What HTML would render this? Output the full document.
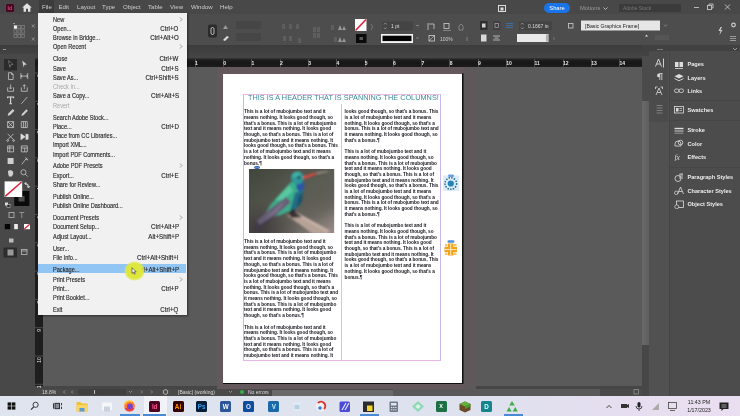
<!DOCTYPE html>
<html><head><meta charset="utf-8"><title>InDesign</title>
<style>
*{margin:0;padding:0;box-sizing:border-box}
html,body{width:740px;height:416px;overflow:hidden;background:#5a5a5a;font-family:"Liberation Sans",sans-serif}
.a{position:absolute}
#menubar{left:0;top:0;width:740px;height:14px;background:#484848}
#menubar span{position:absolute;top:3px;font-size:6.1px;color:#cdcdcd;line-height:8px;filter:blur(.3px)}
#ctrl{left:0;top:14px;width:740px;height:32px;background:#4d4d4d}
#tabbar{left:0;top:45px;width:740px;height:14px;background:linear-gradient(#3c3c3c,#464646)}
#hruler{left:35px;top:57.5px;width:607px;height:9.5px;background:linear-gradient(#383838 0,#1e1e1e 2px,#161616 5px,#1c1c1c 100%)}
#hruler span{position:absolute;top:2.3px;font-size:5px;font-weight:bold;color:#e6e6e6;line-height:7px;filter:blur(.3px)}
#hruler i{position:absolute;top:1px;width:1px;height:8.5px;background:#4a4a4a}
#tools{left:0;top:54px;width:35px;height:342px;background:#484848}
#vruler{left:35px;top:67px;width:8.3px;height:321px;background:#1e1e1e}
#canvas{left:43px;top:67px;width:599px;height:322px;background:#5a5a5a}
#status{left:35px;top:386px;width:625px;height:10px;background:#464646}
#taskbar{left:0;top:396px;width:740px;height:20px;background:linear-gradient(90deg,#dfe4ee 0%,#dde2ee 60%,#e6def0 85%,#eadff0 100%)}
#page{left:223px;top:73.5px;width:239px;height:309px;background:#fff}
#menu{left:38px;top:13px;width:148.5px;height:301.8px;background:#f1f1f1;box-shadow:1px 1px 2px rgba(0,0,0,.45)}
#menu div{position:absolute;left:0;width:148px;height:9px;font-size:6.6px;line-height:9px;color:#2a2a2a;white-space:nowrap;-webkit-text-stroke:.15px #2a2a2a}
#menu div.dis{-webkit-text-stroke:0}
#menu div u{position:absolute;left:14.5px;text-decoration:none;transform:scaleX(.85);transform-origin:0 50%}
#menu div b{position:absolute;right:7.4px;font-weight:normal;transform:scaleX(.93);transform-origin:100% 50%}
#menu div.dis{color:#a8a8a8}
#menu div.hl{background:none}
.doc{font-weight:bold;font-size:4.72px;line-height:5.7px;color:#15151c;letter-spacing:-.045px;white-space:nowrap}
.blur{filter:blur(.35px)}
</style></head><body>
<div class="a" id="menubar"><div style="position:absolute;left:39px;top:0;width:15px;height:14px;background:#3c3c3c"></div>
<span style="left:42px">File</span>
<span style="left:58.5px">Edit</span>
<span style="left:77px">Layout</span>
<span style="left:102px">Type</span>
<span style="left:123px">Object</span>
<span style="left:148px">Table</span>
<span style="left:170px">View</span>
<span style="left:191px">Window</span>
<span style="left:220px">Help</span>
</div>
<div class="a" id="ctrl"></div>
<div class="a" id="tabbar"></div>
<div class="a" id="canvas"></div>
<div class="a" id="hruler">
<i style="left:18.2px"></i><span style="left:18.5px">6</span>
<i style="left:46.5px"></i><span style="left:46.8px">5</span>
<i style="left:74.8px"></i><span style="left:75.1px">4</span>
<i style="left:103.1px"></i><span style="left:103.4px">3</span>
<i style="left:131.4px"></i><span style="left:131.7px">2</span>
<i style="left:159.7px"></i><span style="left:160.0px">1</span>
<i style="left:188.0px"></i><span style="left:188.3px">0</span>
<i style="left:216.3px"></i><span style="left:216.6px">1</span>
<i style="left:244.6px"></i><span style="left:244.9px">2</span>
<i style="left:272.9px"></i><span style="left:273.2px">3</span>
<i style="left:301.2px"></i><span style="left:301.5px">4</span>
<i style="left:329.5px"></i><span style="left:329.8px">5</span>
<i style="left:357.8px"></i><span style="left:358.1px">6</span>
<i style="left:386.1px"></i><span style="left:386.4px">7</span>
<i style="left:414.4px"></i><span style="left:414.7px">8</span>
<i style="left:442.7px"></i><span style="left:443.0px">9</span>
<i style="left:471.0px"></i><span style="left:471.3px">10</span>
<i style="left:499.3px"></i><span style="left:499.6px">11</span>
<i style="left:527.6px"></i><span style="left:527.9px">12</span>
<i style="left:555.9px"></i><span style="left:556.2px">13</span>
<i style="left:584.2px"></i><span style="left:584.5px">14</span>
</div>
<div class="a" id="tools"></div>
<div class="a" id="vruler"></div>
<div class="a" id="status"></div>
<div class="a" style="left:216.5px;top:67px;width:259px;height:322px;background:#5e585a"></div>
<div class="a" style="left:216.5px;top:67px;width:247px;height:322px;background:#64585d"></div>
<div class="a" style="left:462px;top:73px;width:2px;height:311px;background:#4a2a32"></div>
<div class="a" style="left:223px;top:73.5px;width:240px;height:310px;background:#111"></div>
<div class="a" id="page"></div>
<div class="a doc blur" style="left:244px;top:109.2px">This is a lot of mubojumbo text and it<br>means nothing. It looks good though, so<br>that&#x27;s a bonus. This is a lot of mubojumbo<br>text and it means nothing. It looks good<br>though, so that&#x27;s a bonus. This is a lot of<br>mubojumbo text and it means nothing. It<br>looks good though, so that&#x27;s a bonus. This<br>is a lot of mubojumbo text and it means<br>nothing. It looks good though, so that&#x27;s a<br>bonus.¶</div>
<div class="a doc blur" style="left:244px;top:239.0px">This is a lot of mubojumbo text and it<br>means nothing. It looks good though, so<br>that&#x27;s a bonus. This is a lot of mubojumbo<br>text and it means nothing. It looks good<br>though, so that&#x27;s a bonus. This is a lot of<br>mubojumbo text and it means nothing. It<br>looks good though, so that&#x27;s a bonus. This<br>is a lot of mubojumbo text and it means<br>nothing. It looks good though, so that&#x27;s a<br>bonus. This is a lot of mubojumbo text and<br>it means nothing. It looks good though, so<br>that&#x27;s a bonus. This is a lot of mubojumbo<br>text and it means nothing. It looks good<br>though, so that&#x27;s a bonus.¶<br>&nbsp;<br>This is a lot of mubojumbo text and it<br>means nothing. It looks good though, so<br>that&#x27;s a bonus. This is a lot of mubojumbo<br>text and it means nothing. It looks good<br>though, so that&#x27;s a bonus. This is a lot of<br>mubojumbo text and it means nothing. It</div>
<div class="a doc blur" style="left:344.6px;top:109.2px">looks good though, so that&#x27;s a bonus. This<br>is a lot of mubojumbo text and it means<br>nothing. It looks good though, so that&#x27;s a<br>bonus. This is a lot of mubojumbo text and<br>it means nothing. It looks good though, so<br>that&#x27;s a bonus.¶<br>&nbsp;<br>This is a lot of mubojumbo text and it<br>means nothing. It looks good though, so<br>that&#x27;s a bonus. This is a lot of mubojumbo<br>text and it means nothing. It looks good<br>though, so that&#x27;s a bonus. This is a lot of<br>mubojumbo text and it means nothing. It<br>looks good though, so that&#x27;s a bonus. This<br>is a lot of mubojumbo text and it means<br>nothing. It looks good though, so that&#x27;s a<br>bonus. This is a lot of mubojumbo text and<br>it means nothing. It looks good though, so<br>that&#x27;s a bonus.¶<br>&nbsp;<br>This is a lot of mubojumbo text and it<br>means nothing. It looks good though, so<br>that&#x27;s a bonus. This is a lot of mubojumbo<br>text and it means nothing. It looks good<br>though, so that&#x27;s a bonus. This is a lot of<br>mubojumbo text and it means nothing. It<br>looks good though, so that&#x27;s a bonus. This<br>is a lot of mubojumbo text and it means<br>nothing. It looks good though, so that&#x27;s a<br>bonus.¶</div>
<div class="a blur" style="left:248px;top:93.3px;font-size:7.3px;line-height:9px;color:#3a8b99;white-space:nowrap;letter-spacing:.02px">THIS IS A HEADER THAT IS SPANNING THE COLUMNS!</div>
<div class="a" style="left:243px;top:94px;width:197.5px;height:267px;border:1px solid #b9a6ee;border-top-color:#e7a6e0;border-bottom-color:#e7a6e0;opacity:.8"></div>
<div class="a" style="left:341px;top:104px;width:1px;height:256px;background:#cfc4f2"></div>
<style>
.ic{position:absolute;fill:none;stroke:#d6d6d6;stroke-width:1;overflow:visible}
.rp{position:absolute;left:687.5px;font-size:5.6px;font-weight:bold;color:#ececec;line-height:8px;white-space:nowrap}
.tb{position:absolute;top:400.6px;width:11px;height:11px;border-radius:1.5px}
.tb span{position:absolute;left:0;top:0;width:11px;text-align:center;font-size:6.5px;line-height:11px;font-weight:bold}
.ul{position:absolute;top:414.3px;height:1.7px;background:#4a8ad4}
.st{position:absolute;top:388.5px;font-size:5px;line-height:7px;color:#d8d8d8;white-space:nowrap}
</style>
<div class="a blur" style="left:5.7px;top:3.8px;width:8.2px;height:8px;background:#4a0620;border-radius:1.5px"><span style="position:absolute;left:0;width:8.2px;text-align:center;top:0;font-size:5px;line-height:8px;color:#e0457c;font-weight:bold">Id</span></div>
<svg class="a blur" style="left:22px;top:3px" width="10" height="9" viewBox="0 0 10 9"><path d="M5 0.3 L9.8 4.6 H8.4 V8.8 H6 V5.8 H4 V8.8 H1.6 V4.6 H0.2 Z" fill="#e4e4e4"/></svg>
<div class="a blur" style="left:544px;top:3px;width:26px;height:10px;border-radius:5px;background:#1a74e8"><span style="position:absolute;left:0;width:26px;text-align:center;font-size:5.8px;line-height:10px;color:#fff">Share</span></div>
<div class="a blur" style="left:580px;top:4px;font-size:5.8px;line-height:8px;color:#9a9a9a">Motions</div>
<svg class="a" style="left:603px;top:7px" width="5" height="3"><path d="M0.5 0.5 L2.5 2.5 L4.5 0.5" stroke="#bbb" fill="none"/></svg>
<div class="a blur" style="left:619px;top:3.5px;width:62px;height:8.5px;background:#3b3b3b;border-radius:1px"><span style="position:absolute;left:4px;top:0;font-size:5px;line-height:8.5px;color:#777">Adobe Stock</span></div>
<svg class="a blur" style="left:497px;top:3px" width="10" height="10"><rect x="1.5" y="2.5" width="7" height="6" stroke="#ddd" fill="none"/><rect x="3.5" y="4.5" width="3" height="3" fill="#ddd"/></svg>
<svg class="a blur" style="left:692px;top:2px" width="44" height="10"><path d="M2 5.5 H7" stroke="#c4c4c4" stroke-width=".9"/><rect x="15.5" y="3.5" width="4" height="4" stroke="#c4c4c4" fill="none" stroke-width=".9"/><path d="M17 3.5 V2 H21 V6 H19.5" stroke="#c4c4c4" fill="none" stroke-width=".9"/><path d="M33 2.5 L38 7.5 M38 2.5 L33 7.5" stroke="#c4c4c4" stroke-width=".9"/></svg>
<svg class="a blur" style="left:0;top:0" width="740" height="48" viewBox="0 0 740 48"><rect x="13.5" y="23" width="1" height="1" fill="#ddd" /><rect x="14.0" y="25.5" width="2.9" height="3.2" fill="none" stroke="#8a8a8a" stroke-width=".6"/><rect x="14.0" y="29.9" width="2.9" height="3.2" fill="none" stroke="#8a8a8a" stroke-width=".6"/><rect x="14.0" y="34.3" width="2.9" height="3.2" fill="none" stroke="#8a8a8a" stroke-width=".6"/><rect x="17.9" y="25.5" width="2.9" height="3.2" fill="none" stroke="#8a8a8a" stroke-width=".6"/><rect x="17.9" y="29.9" width="2.9" height="3.2" fill="none" stroke="#8a8a8a" stroke-width=".6"/><rect x="17.9" y="34.3" width="2.9" height="3.2" fill="none" stroke="#8a8a8a" stroke-width=".6"/><rect x="21.8" y="25.5" width="2.9" height="3.2" fill="none" stroke="#8a8a8a" stroke-width=".6"/><rect x="21.8" y="29.9" width="2.9" height="3.2" fill="none" stroke="#8a8a8a" stroke-width=".6"/><rect x="21.8" y="34.3" width="2.9" height="3.2" fill="none" stroke="#8a8a8a" stroke-width=".6"/><rect x="14" y="25.5" width="2.9" height="3.2" fill="#eee" /><path d="M32 24.5 l2.5 3 m0 -3 l-2.5 3 M32 37.5 l2.5 3 m0 -3 l-2.5 3" stroke="#aaa" stroke-width=".7"/><rect x="208" y="24.5" width="9" height="13" fill="#2b2b2b" rx="2"/><rect x="211" y="27.500" width="3" height="7" rx="1.500" fill="none" stroke="#ddd" stroke-width=".8"/><path d="M223 29 l2.5 -4 l2.5 4 z" fill="#999"/><path d="M223 40 l4 -4 l2 1 l-4 4 z" fill="#ddd"/><rect x="44" y="21" width="22" height="8" fill="#464646" /><rect x="44" y="33" width="22" height="8" fill="#464646" /><rect x="75" y="21" width="22" height="8" fill="#464646" /><rect x="75" y="33" width="22" height="8" fill="#464646" /><rect x="236" y="21" width="25" height="8" fill="#464646" /><rect x="236" y="33" width="25" height="8" fill="#464646" /><rect x="282" y="24" width="3" height="5" fill="#5e5e5e" /><rect x="289" y="24" width="3" height="5" fill="#5e5e5e" /><rect x="296" y="24" width="3" height="5" fill="#5e5e5e" /><rect x="283" y="36" width="3" height="5" fill="#5e5e5e" /><rect x="289" y="36" width="3" height="5" fill="#5e5e5e" /><rect x="298" y="38" width="3" height="5" fill="#5e5e5e" /><rect x="313" y="27" width="3" height="5" fill="#5e5e5e" /><rect x="317" y="27" width="3" height="5" fill="#5e5e5e" /><rect x="313" y="33" width="3" height="5" fill="#5e5e5e" /><rect x="317" y="33" width="3" height="5" fill="#5e5e5e" /><rect x="331" y="25" width="3" height="5" fill="#5e5e5e" /><rect x="334" y="37" width="3" height="5" fill="#5e5e5e" /><path d="M338 30 l2 -5 l2 5 l2 -4 l2 4 z M338 42 l2 -5 l2 5 l2 -4 l2 4 z" fill="#999"/><rect x="355" y="19" width="11.5" height="12" fill="#fff" /><path d="M355.5 30.5 L366 19.5" stroke="#e0203a" stroke-width="1.6"/><rect x="356" y="34" width="10.5" height="9" fill="#0a0a0a" /><rect x="359.5" y="37" width="3.5" height="3" fill="#555" /><path d="M371 24 l1.5 3 l-1.5 3" stroke="#888" fill="none" stroke-width=".7"/><rect x="382" y="21.5" width="31" height="9" fill="#444" /><text x="391" y="28.3" font-size="5" fill="#ddd" font-family="Liberation Sans">1 pt</text><path d="M384 24.5 l1.3 -1.5 l1.3 1.5 M384 27.5 l1.3 1.5 l1.3 -1.5" stroke="#bbb" fill="none" stroke-width=".6"/><path d="M416 25.5 h3" stroke="#999" stroke-width=".7"/><path d="M416 38 h3" stroke="#999" stroke-width=".7"/><rect x="381" y="34" width="32" height="9" fill="#f4f4f4" /><rect x="382.5" y="35.7" width="29" height="5.4" fill="#050505" /><path d="M429 24 h5 v5 M428 23 v7" stroke="#ccc" fill="none" stroke-width=".8"/><rect x="444" y="23.5" width="5" height="5" stroke="#ccc" fill="none" stroke-width=".8"/><path d="M443 30.5 h8" stroke="#999" stroke-width=".7"/><path d="M459 30 v-4 l2 -2 l2 2 v4 z" stroke="#999" fill="none" stroke-width=".7"/><rect x="429" y="35.5" width="5.5" height="5.5" stroke="#ccc" fill="none" stroke-width=".8"/><path d="M429 41 l5.5 -5.5" stroke="#ccc" stroke-width=".6"/><text x="440" y="40.8" font-size="5" fill="#ccc" font-family="Liberation Sans">100%</text><path d="M467 37 v4" stroke="#999" stroke-width=".7"/><rect x="480" y="21" width="7.5" height="9" fill="#2f2f2f" /><rect x="482" y="23.5" width="3.5" height="4" fill="#cfcfcf" /><rect x="493" y="21" width="7.5" height="9" fill="#404040" /><rect x="495" y="23.5" width="3.5" height="4" fill="none" stroke="#aaa" stroke-width=".7"/><path d="M506 23.5 h7 M506 25.5 h7 M506 27.5 h7" stroke="#3f6f9f" stroke-width=".9"/><rect x="481" y="34.5" width="5.5" height="7" fill="#d8d8d8" /><path d="M493 36 h7 M494.5 38 h4 M493 40 h7" stroke="#ccc" stroke-width=".8"/><rect x="519" y="21.5" width="33" height="9" fill="#444" /><text x="528" y="28.3" font-size="5" fill="#ddd" font-family="Liberation Sans">0.1667 in</text><path d="M521 24.5 l1.3 -1.5 l1.3 1.5 M521 27.5 l1.3 1.5 l1.3 -1.5" stroke="#bbb" fill="none" stroke-width=".6"/><rect x="517" y="34" width="31.5" height="8" fill="#e9e9e9" /><rect x="546.5" y="34.5" width="1" height="7" fill="#777" /><path d="M554 37 v3" stroke="#888" stroke-width=".7"/><rect x="568.5" y="23.5" width="4.5" height="4.5" fill="none" stroke="#ccc" stroke-width=".8"/><rect x="581" y="20.5" width="79" height="10" fill="#e6e6e6" /><text x="585" y="27.6" font-size="5.2" fill="#222" font-family="Liberation Sans">[Basic Graphics Frame]</text><path d="M664 24.5 l1.5 1.8 l1.5 -1.8" stroke="#999" fill="none" stroke-width=".7"/><path d="M645 36.5 l1.5 -2 l1.5 2 z" fill="#ddd"/><rect x="655" y="35" width="14" height="5" fill="#555" /><path d="M720.5 27 l-2 4 h2 l-1 4 l3 -5 h-2 l1.5 -3 z" fill="#ccc"/><circle cx="733.5" cy="25" r="1.8" fill="none" stroke="#ccc" stroke-width="1.2"/><path d="M730 36.5 h6 M730 38.5 h6 M730 40.5 h6" stroke="#bbb" stroke-width=".7"/></svg>
<div class="a" style="left:642px;top:56px;width:7px;height:46px;background:#4b4b4b"></div><div class="a" style="left:641.5px;top:101px;width:7.5px;height:244px;background:linear-gradient(90deg,#6a6a6a,#5e5e5e)"></div>
<div class="a" style="left:642px;top:345px;width:7px;height:51px;background:#474747"></div>
<div class="a" style="left:649px;top:46px;width:20px;height:350px;background:#515151"></div>
<div class="a" style="left:649px;top:50px;width:19px;height:72px;background:#4b4b4b"></div>
<div class="a" style="left:668.5px;top:46px;width:1.5px;height:350px;background:#444"></div>
<div class="a" style="left:670px;top:46px;width:70px;height:350px;background:#4c4c4c"></div>
<div class="a" style="left:642px;top:45px;width:98px;height:6px;background:#414141"></div>
<svg class="a blur" style="left:649px;top:46px" width="91" height="8"><path d="M8 3.5 h6" stroke="#777"/><path d="M84 2 l2 2 l2 -2" stroke="#bbb" fill="none" stroke-width=".7"/></svg>
<div class="a" style="left:670px;top:100px;width:70px;height:1px;background:#464646"></div>
<div class="a" style="left:670px;top:120px;width:70px;height:1px;background:#464646"></div>
<div class="a" style="left:670px;top:167px;width:70px;height:1px;background:#464646"></div>
<svg class="a blur" style="left:674px;top:59.5px" width="10" height="9" viewBox="0 0 10 9"><rect x="1" y="2" width="3.5" height="5" fill="#ddd"/><rect x="5.5" y="2" width="3.5" height="5" fill="#ddd"/><path d="M1 8.5 h8" stroke="#ddd" stroke-width=".8"/></svg>
<div class="rp blur" style="top:60px">Pages</div>
<svg class="a blur" style="left:674px;top:73.0px" width="10" height="9" viewBox="0 0 10 9"><path d="M5 1 L9.5 3.3 L5 5.6 L0.5 3.3 Z" fill="#ddd"/><path d="M0.5 5.5 L5 7.8 L9.5 5.5" stroke="#ddd" fill="none" stroke-width=".9"/></svg>
<div class="rp blur" style="top:73.5px">Layers</div>
<svg class="a blur" style="left:674px;top:86.0px" width="10" height="9" viewBox="0 0 10 9"><rect x="0.5" y="3" width="4.5" height="3.5" rx="1.7" fill="none" stroke="#ddd" stroke-width=".8"/><rect x="5" y="3" width="4.5" height="3.5" rx="1.7" fill="none" stroke="#ddd" stroke-width=".8"/></svg>
<div class="rp blur" style="top:86.5px">Links</div>
<svg class="a blur" style="left:674px;top:105.0px" width="10" height="9" viewBox="0 0 10 9"><rect x="0.5" y="1.5" width="9" height="6.5" fill="none" stroke="#ddd" stroke-width=".8"/><rect x="2" y="3" width="2.5" height="3.5" fill="#ddd"/><path d="M5.5 3.5 h2.5 M5.5 5.5 h2.5" stroke="#ddd" stroke-width=".7"/></svg>
<div class="rp blur" style="top:105.5px">Swatches</div>
<svg class="a blur" style="left:674px;top:125.5px" width="10" height="9" viewBox="0 0 10 9"><path d="M0.5 2.5 h9" stroke="#ddd" stroke-width="1.4"/><path d="M0.5 5 h9" stroke="#ddd" stroke-width=".9"/><path d="M0.5 7.2 h9" stroke="#ddd" stroke-width=".5"/></svg>
<div class="rp blur" style="top:126px">Stroke</div>
<svg class="a blur" style="left:674px;top:139.0px" width="10" height="9" viewBox="0 0 10 9"><path d="M1 5 a3 3 0 0 1 6 0 v2 h-6 z" fill="none" stroke="#ddd" stroke-width=".8"/><circle cx="6.5" cy="3.5" r="2.3" fill="none" stroke="#ddd" stroke-width=".8"/></svg>
<div class="rp blur" style="top:139.5px">Color</div>
<svg class="a blur" style="left:674px;top:152.0px" width="10" height="9" viewBox="0 0 10 9"><text x="0.5" y="7.5" font-size="7.5" font-style="italic" fill="#ddd" font-family="Liberation Serif">fx</text></svg>
<div class="rp blur" style="top:152.5px">Effects</div>
<svg class="a blur" style="left:674px;top:172.5px" width="10" height="9" viewBox="0 0 10 9"><circle cx="4" cy="5.5" r="3" fill="none" stroke="#ddd" stroke-width=".8"/><path d="M6 1 v5 M8 1 v5 M5.5 1 h3.5" stroke="#ddd" stroke-width=".8"/></svg>
<div class="rp blur" style="top:173px">Paragraph Styles</div>
<svg class="a blur" style="left:674px;top:186.0px" width="10" height="9" viewBox="0 0 10 9"><path d="M3.5 8 L6.5 1 L9.5 8 M4.7 5.5 h3.6" stroke="#ddd" fill="none" stroke-width=".8"/><circle cx="2.3" cy="6.8" r="1.8" fill="none" stroke="#ddd" stroke-width=".7"/></svg>
<div class="rp blur" style="top:186.5px">Character Styles</div>
<svg class="a blur" style="left:674px;top:199.5px" width="10" height="9" viewBox="0 0 10 9"><rect x="2.5" y="1" width="7" height="6.5" fill="none" stroke="#ddd" stroke-width=".8"/><circle cx="2.8" cy="6.8" r="2" fill="#4c4c4c" stroke="#ddd" stroke-width=".7"/></svg>
<div class="rp blur" style="top:200px">Object Styles</div>
<svg class="a blur" style="left:649px;top:52px" width="20" height="70" viewBox="0 0 20 70"><path d="M6.5 14.5 L9.5 7 L12.5 14.5 M7.7 12 h3.6 M14.5 6.5 v9" stroke="#ddd" fill="none" stroke-width=".9"/><path d="M10.800 21.500 v6.500 M12.800 21.500 v6.500 M13.500 21.500 h-3" stroke="#ddd" fill="none" stroke-width=".8"/><path d="M10.800 21.500 h-0.800 a1.900 1.900 0 0 0 0 3.800 h0.800 z" fill="#ddd"/><path d="M7 43 L10 36 L13 43 M8.2 40.5 h3.6 M6.5 35 h2 M11.5 35 h2 M6.5 35 v2 M13.5 35 v2" stroke="#ddd" fill="none" stroke-width=".8"/><path d="M7.5 53.5 h6 M7.5 56 h6 M7.5 58.5 h6 M7.5 61 h6" stroke="#8a8a8a" stroke-width=".8"/></svg>
<svg class="a blur" style="left:0;top:0" width="36" height="396" viewBox="0 0 36 396"><rect x="4" y="59" width="13" height="11.5" fill="#2b2b2b"/><rect x="3.5" y="247.5" width="13.5" height="10" fill="#2c2c2c"/><path d="M3 49.5 h3" stroke="#aaa" stroke-width=".8"/><g transform="translate(10.6,64) scale(.85)"><path d="M-2.5 -4 L3 0.5 L0.3 0.8 L-0.8 3.8 Z" stroke="#8a8a8a" fill="#1a1a1a" stroke-width=".8"/></g><g transform="translate(24.3,64) scale(.85)"><path d="M-2.5 -4 L3 0.5 L0.3 0.8 L-0.8 3.8 Z" fill="#cfcfcf" stroke="none"/></g><g transform="translate(10.6,76.1) scale(.85)"><path d="M-2.5 -4 h3.5 l2 2 v6 h-5.5 z M1 -4 v2 h2" stroke="#cccccc" fill="none" stroke-width=".9"/></g><g transform="translate(24.3,76.1) scale(.85)"><path d="M-4 -3.5 v7 M4 -3.5 v7 M-4 0 h8 M-2.5 -1.3 L-4 0 l1.5 1.3 M2.5 -1.3 L4 0 l-1.5 1.3" stroke="#cccccc" fill="none" stroke-width=".9"/></g><g transform="translate(10.6,88.3) scale(.85)"><path d="M-3.5 -1 v4.5 h7 v-4.5 M0 -4.5 v5 M-1.8 -1 L0 0.8 L1.8 -1" stroke="#cccccc" fill="none" stroke-width=".9"/></g><g transform="translate(24.3,88.3) scale(.85)"><path d="M-3.5 -1 v4.5 h7 v-4.5 M0 1 v-5 M-1.8 -2.5 L0 -4.3 L1.8 -2.5" stroke="#cccccc" fill="none" stroke-width=".9"/></g><g transform="translate(10.6,100.4) scale(.85)"><path d="M-3.5 -2.5 v-1.5 h7 v1.5 M0 -4 v8 M-1.5 4 h3" stroke="#dcdcdc" fill="none" stroke-width="1.3"/></g><g transform="translate(24.3,100.4) scale(.85)"><path d="M-3.5 4 L3.5 -4" stroke="#cccccc" fill="none" stroke-width=".9"/></g><g transform="translate(10.6,112.5) scale(.85)"><path d="M-3.5 4 l1 -3 l5 -5 l2 2 l-5 5 z" fill="#cfcfcf" stroke="none"/></g><g transform="translate(24.3,112.5) scale(.85)"><path d="M-3.5 4 l0.8 -2.5 l5.2 -5.2 l1.7 1.7 l-5.2 5.2 z" fill="#cfcfcf" stroke="none"/></g><g transform="translate(10.6,124.6) scale(.85)"><path d="M-3.5 -3.5 h7 v7 h-7 z M-3.5 -3.5 l7 7 M3.5 -3.5 l-7 7" stroke="#cccccc" fill="none" stroke-width=".9"/></g><g transform="translate(24.3,124.6) scale(.85)"><path d="M-3.5 -3.5 h7 v7 h-7 z M-1 -3.5 v7 M1.3 -3.5 v7" stroke="#cccccc" fill="none" stroke-width=".9"/></g><g transform="translate(10.6,136.8) scale(.85)"><path d="M-3.5 -3.5 L3.5 3.5 M3.5 -3.5 L-3.5 3.5 M-3.5 3.5 a1 1 0 1 0 0.1 0 M3.5 3.5 a1 1 0 1 0 0.1 0" stroke="#cccccc" fill="none" stroke-width=".9"/></g><g transform="translate(24.3,136.8) scale(.85)"><path d="M-4 -3.5 L1 0 L-4 3.5 Z M1.5 -3 h3 v6 h-3" stroke="#dcdcdc" fill="#dcdcdc" stroke-width=".7"/></g><g transform="translate(10.6,148.9) scale(.85)"><path d="M-3.5 -3.5 h7 v7 h-7 z M-3.5 -1 h7 M-1 -3.5 v7" stroke="#cccccc" fill="none" stroke-width=".9"/></g><g transform="translate(24.3,148.9) scale(.85)"><path d="M-3.5 -3.5 h7 v7 h-7 z M-3.5 -1 h7 M0.5 -1 v4.5" stroke="#cccccc" fill="none" stroke-width=".9"/></g><g transform="translate(10.6,161) scale(.85)"><path d="M-3.5 -3.5 h7 v7 h-7 z" fill="#cfcfcf" stroke="none"/></g><g transform="translate(24.3,161) scale(.85)"><path d="M-3 4 L2 -2.5 l2 1.5 M1 -4 l3.5 2.5" stroke="#cccccc" fill="none" stroke-width=".9"/></g><g transform="translate(10.6,173.1) scale(.85)"><path d="M-3 0 v-2.5 a1 1 0 0 1 1.5 0 v-1 a1 1 0 0 1 1.5 0 v0.5 a1 1 0 0 1 1.5 0 v1 a1 1 0 0 1 1.5 0 v3 l-1.5 3 h-3.5 z" fill="#cfcfcf" stroke="none"/></g><g transform="translate(24.3,173.1) scale(.85)"><path d="M-1 -1 m-3 0 a3 3 0 1 0 6 0 a3 3 0 1 0 -6 0 M1.3 1.3 L4 4" stroke="#cccccc" fill="none" stroke-width=".9"/></g><rect x="14.2" y="191" width="15.2" height="15" fill="#0a0a0a"/><rect x="18.5" y="196" width="6.1" height="5.5" fill="#4a4a4a"/><rect x="4.6" y="181.4" width="17.6" height="15.6" fill="#fff"/><path d="M5.2 196.4 L21.6 182" stroke="#e0203a" stroke-width="1.5"/><path d="M25.5 183.500 a3 3 0 0 1 3 3 M24.5 183.500 l1.5 -1.3 v2.6 z M28.5 188 l-1.3 -1.5 h2.6 z" stroke="#ccc" fill="#ccc" stroke-width=".7"/><rect x="5" y="202.5" width="3" height="3" fill="#ddd"/><rect x="7" y="204.5" width="3" height="3" fill="#222" stroke="#ddd" stroke-width=".5"/><rect x="9" y="212.500" width="5" height="5" fill="none" stroke="#aaa" stroke-width=".9"/><path d="M19.300 212.500 h5 M21.800 212.500 v5.500" stroke="#999" stroke-width=".9"/><rect x="4.8" y="224" width="5.4" height="5.2" fill="#050505"/><rect x="14.2" y="224" width="3.6" height="5.2" fill="#eee"/><rect x="24" y="224" width="6" height="5.2" fill="#fff"/><path d="M24.3 229 L29.7 224.2" stroke="#e0203a" stroke-width="1.2"/><rect x="9" y="238.5" width="4.5" height="4" fill="#bbb"/><rect x="7.5" y="249.5" width="6" height="6" fill="#999"/><rect x="21.5" y="249.5" width="5.5" height="5" fill="none" stroke="#bbb" stroke-width=".8"/><path d="M21.5 251 h5.5" stroke="#bbb" stroke-width=".8"/></svg>
<svg class="a blur" style="left:0;top:0" width="44" height="388" viewBox="0 0 44 388"><path d="M35 73.0 h8" stroke="#555" stroke-width=".8"/><text transform="translate(41.3,74.2) rotate(-90)" text-anchor="end" font-size="5" fill="#e6e6e6" font-family="Liberation Sans">0</text><path d="M35 101.3 h8" stroke="#555" stroke-width=".8"/><text transform="translate(41.3,102.5) rotate(-90)" text-anchor="end" font-size="5" fill="#e6e6e6" font-family="Liberation Sans">1</text><path d="M35 129.6 h8" stroke="#555" stroke-width=".8"/><text transform="translate(41.3,130.8) rotate(-90)" text-anchor="end" font-size="5" fill="#e6e6e6" font-family="Liberation Sans">2</text><path d="M35 157.9 h8" stroke="#555" stroke-width=".8"/><text transform="translate(41.3,159.1) rotate(-90)" text-anchor="end" font-size="5" fill="#e6e6e6" font-family="Liberation Sans">3</text><path d="M35 186.2 h8" stroke="#555" stroke-width=".8"/><text transform="translate(41.3,187.4) rotate(-90)" text-anchor="end" font-size="5" fill="#e6e6e6" font-family="Liberation Sans">4</text><path d="M35 214.5 h8" stroke="#555" stroke-width=".8"/><text transform="translate(41.3,215.7) rotate(-90)" text-anchor="end" font-size="5" fill="#e6e6e6" font-family="Liberation Sans">5</text><path d="M35 242.8 h8" stroke="#555" stroke-width=".8"/><text transform="translate(41.3,244.0) rotate(-90)" text-anchor="end" font-size="5" fill="#e6e6e6" font-family="Liberation Sans">6</text><path d="M35 271.1 h8" stroke="#555" stroke-width=".8"/><text transform="translate(41.3,272.3) rotate(-90)" text-anchor="end" font-size="5" fill="#e6e6e6" font-family="Liberation Sans">7</text><path d="M35 299.4 h8" stroke="#555" stroke-width=".8"/><text transform="translate(41.3,300.6) rotate(-90)" text-anchor="end" font-size="5" fill="#e6e6e6" font-family="Liberation Sans">8</text><path d="M35 327.7 h8" stroke="#555" stroke-width=".8"/><text transform="translate(41.3,328.9) rotate(-90)" text-anchor="end" font-size="5" fill="#e6e6e6" font-family="Liberation Sans">9</text><path d="M35 356.0 h8" stroke="#555" stroke-width=".8"/><text transform="translate(41.3,357.2) rotate(-90)" text-anchor="end" font-size="5" fill="#e6e6e6" font-family="Liberation Sans">10</text><path d="M35 384.3 h8" stroke="#555" stroke-width=".8"/><text transform="translate(41.3,385.5) rotate(-90)" text-anchor="end" font-size="5" fill="#e6e6e6" font-family="Liberation Sans">11</text></svg>
<div class="a" style="left:35px;top:389px;width:607px;height:7px;background:#4a4a4a"></div>
<div class="a" style="left:272px;top:390px;width:121px;height:5.5px;background:#6a6a6a"></div>
<div class="a" style="left:393px;top:389px;width:207px;height:7px;background:#595959"></div>
<div class="st blur" style="left:42px">18.8%</div>
<div class="st blur" style="left:178px">[Basic] (working)</div>
<div class="st blur" style="left:248px">No errors</div>
<div class="a blur" style="left:240px;top:390px;width:4px;height:4px;border-radius:2px;background:#2fb344"></div>
<svg class="a blur" style="left:60px;top:388px" width="200" height="8" viewBox="0 0 200 8"><path d="M5 2.5 l-1.5 1.5 l1.5 1.5 M13 2.5 l-1.5 1.5 l1.5 1.5 M34.5 2 v4 M69 3 l1.5 1.5 l1.5 -1.5 M81 2.5 l1.5 1.5 l-1.5 1.5 M91 2.5 l1.5 1.5 l-1.5 1.5 M169 3 l1.5 1.5 l1.5 -1.5" stroke="#aaa" fill="none" stroke-width=".7"/><circle cx="105.5" cy="4" r="2.3" fill="none" stroke="#ccc" stroke-width=".8"/><rect x="18" y="1" width="48" height="6" fill="#404040"/><path d="M34.5 2 v4" stroke="#ddd" stroke-width=".8"/></svg>
<svg class="a blur" style="left:631px;top:388px" width="10" height="8"><rect x="3" y="1.5" width="4.5" height="4.5" fill="none" stroke="#999" stroke-width=".7"/></svg>
<div class="a" id="taskbar"></div>
<div class="a" style="left:143.5px;top:396px;width:23px;height:20px;background:rgba(255,255,255,.55)"></div>
<svg class="a blur" style="left:0;top:0" width="740" height="416" viewBox="0 0 740 416"><rect x="7.6" y="402.4" width="3.6" height="3.3" fill="#111"/><rect x="11.8" y="402.4" width="3.6" height="3.3" fill="#111"/><rect x="7.6" y="406.29999999999995" width="3.6" height="3.3" fill="#111"/><rect x="11.8" y="406.29999999999995" width="3.6" height="3.3" fill="#111"/><circle cx="35.6" cy="404.8" r="2.600" fill="none" stroke="#2a2a2a" stroke-width=".9"/><path d="M33.700 406.800 L31 409.600" stroke="#2a2a2a" stroke-width="1.1"/><rect x="55" y="403.300" width="4.500" height="5.400" fill="#8a8f98" stroke="#222" stroke-width=".9"/><path d="M61.500 403 v2.300 M61.500 406.700 v2.300 M53.500 403.300 v5.400" stroke="#222" stroke-width=".9"/><path d="M76.5 402 h4 l1 1.5 h6 v8 h-11 z" fill="#f1c232"/><rect x="76.500" y="405" width="11" height="6.500" fill="#f7d66a"/><rect x="79.500" y="408" width="5" height="3.5" fill="#5a9bd8"/><rect x="102" y="402.5" width="10" height="8" rx="1" fill="#f4f6fa"/><rect x="104" y="406.500" width="6" height="5" fill="#c9d2e0"/><circle cx="129.5" cy="406" r="5.300" fill="#ff7a2a"/><path d="M124.500 408 a5.300 5.300 0 0 0 10 0 z" fill="#f0403c"/><circle cx="130" cy="406.300" r="2.900" fill="#7b3fd0"/><path d="M124.5 404.500 a5.300 5.300 0 0 1 8 -2.500" stroke="#ffc83a" stroke-width="1.6" fill="none"/></svg>
<div class="tb blur" style="left:149.2px;background:#4a0620"><span style="color:#ff4f8e;font-size:6.3px">Id</span></div>
<div class="tb blur" style="left:172.5px;background:#330000"><span style="color:#ff9a00;font-size:6.3px">Ai</span></div>
<div class="tb blur" style="left:196.2px;background:#001e36"><span style="color:#31a8ff;font-size:6.3px">Ps</span></div>
<div class="tb blur" style="left:220.2px;background:#2b579a"><span style="color:#ffffff;font-size:6.3px">W</span></div>
<div class="tb blur" style="left:242.9px;background:#0f4c9c"><span style="color:#dbe9ff;font-size:6.3px">O</span></div>
<div class="tb blur" style="left:268.3px;background:#1a6aa8"><span style="color:#c8f0ff;font-size:6.3px">V</span></div>
<div class="tb blur" style="left:435.5px;background:#1d7044"><span style="color:#ffffff;font-size:5.5px">X</span></div>
<div class="tb blur" style="left:481.1px;background:#14858c"><span style="color:#dffcff;font-size:6.3px">D</span></div>
<svg class="a blur" style="left:0;top:0" width="740" height="416" viewBox="0 0 740 416"><rect x="293" y="402" width="8" height="9" fill="#dfe9f3"/><path d="M294.5 406 h5 M294.5 408 h5" stroke="#7fa6c9" stroke-width=".8"/><circle cx="321" cy="406.500" r="5" fill="#f3f3f3"/><path d="M318 403 a4 4 0 0 1 6 6" stroke="#d8362b" stroke-width="2" fill="none"/><circle cx="320" cy="408" r="1.800" fill="#3b7ad9"/><rect x="339.5" y="401.500" width="10.5" height="10.500" rx="1.5" fill="#4a4ad8"/><path d="M342 410 l4 -7 M345 410 l4 -7" stroke="#e4e4ff" stroke-width="1.2"/><rect x="363" y="401.500" width="11" height="10.500" fill="#2c2c2c"/><rect x="367" y="405.500" width="5.500" height="5.500" fill="#f4d430"/><rect x="389.5" y="401.500" width="8.500" height="10.500" rx="1" fill="#6f7a86"/><rect x="391" y="403" width="5.500" height="2.500" fill="#dfe6ee"/><path d="M391 407.500 h5.500 M391 409.800 h5.500" stroke="#dfe6ee" stroke-width="1" stroke-dasharray="1.300 .8"/><path d="M418 401 l6 5.500 l-6 5.500 l-6 -5.500 z" fill="#8fd9b4"/><path d="M418 404 l2.800 2.500 l-2.800 2.500 l-2.800 -2.500 z" fill="#d9f5e7"/><path d="M459.500 404 l5.500 -2.500 l5.500 2.500 v6 l-5.500 2.500 l-5.500 -2.500 z" fill="#6b4a2a"/><path d="M459.500 404 l5.500 -2.500 l5.500 2.500 l-5.500 2.500 z" fill="#5fb23a"/><path d="M465 406.500 l5.500 -2.500 v2.500 l-5.500 2.500 z" fill="#4a9a2c"/><path d="M512 401 l2.800 4.500 h-5.600 z M506.500 411.500 l2.500 -4.500 l2.800 4.500 z M512.500 411.500 l2.800 -4.500 l2.500 4.500 z" fill="#3fae49"/><path d="M606.500 408 l2.500 -2.500 l2.500 2.500" stroke="#333" fill="none" stroke-width=".9"/><rect x="621" y="404" width="6" height="4" fill="#333"/><path d="M627 405 l2 -1 v4 l-2 -1" fill="#333"/><rect x="637.500" y="402" width="3" height="5.500" rx="1.500" fill="#222"/><path d="M636 406 a3 3 0 0 0 6 0 M639 409 v2" stroke="#222" fill="none" stroke-width=".8"/><path d="M652 410 l7 -7 v7 z" fill="#aaa"/><rect x="668.500" y="402.500" width="8" height="6" fill="none" stroke="#444" stroke-width=".8"/><path d="M670 410.500 h5" stroke="#444" stroke-width=".8"/><path d="M719.500 402.500 h9 v6.500 h-5 l-2 2 v-2 h-2 z" fill="#222"/><path d="M721.500 405 h5 M721.500 407 h5" stroke="#eee" stroke-width=".6"/></svg>
<div class="ul" style="left:120px;width:20.3px"></div>
<div class="ul" style="left:143px;width:22.7px"></div>
<div class="ul" style="left:359.5px;width:19.5px"></div>
<div class="ul" style="left:503.5px;width:19.5px"></div>
<div class="a blur" style="left:684px;top:398.5px;width:30px;text-align:center;font-size:5.3px;line-height:7px;color:#222">11:43 PM</div>
<div class="a blur" style="left:684px;top:407.3px;width:30px;text-align:center;font-size:5.3px;line-height:7px;color:#222">1/17/2023</div>
<svg class="a" style="left:249.3px;top:169px" width="85.4" height="64.3" viewBox="0 0 85.4 64.3">
<defs>
<linearGradient id="bg1" x1="0" y1="0" x2="1" y2="1"><stop offset="0" stop-color="#41463c"/><stop offset=".45" stop-color="#55574e"/><stop offset=".75" stop-color="#6c6761"/><stop offset="1" stop-color="#9c8e8a"/></linearGradient>
<radialGradient id="bg2" cx=".12" cy=".95" r=".45"><stop offset="0" stop-color="#3f3a3c"/><stop offset="1" stop-color="#3f3a3c" stop-opacity="0"/></radialGradient>
<radialGradient id="bg3" cx=".8" cy=".3" r=".5"><stop offset="0" stop-color="#5c5d54"/><stop offset="1" stop-color="#5c5d54" stop-opacity="0"/></radialGradient>
<filter id="bl" x="-10%" y="-10%" width="120%" height="120%"><feGaussianBlur stdDeviation="1.0"/></filter>
<clipPath id="cp"><rect width="85.4" height="64.3"/></clipPath>
</defs>
<g clip-path="url(#cp)">
<rect width="85.4" height="64.3" fill="url(#bg1)"/><rect width="85.4" height="64.3" fill="url(#bg3)"/><rect width="85.400" height="64.300" fill="url(#bg2)"/>
<g filter="url(#bl)">
<path d="M38.2 43.4 L48 43.4 L81 61.2 L79 66 L64 65 L39 47 Z" fill="#b7a298"/>
<path d="M48 45 L78 62" stroke="#d2c2b8" stroke-width="1.3"/>
<path d="M37 43 L47 43.500 L53 48 L43 49 Z" fill="#3a3032"/>
<path d="M16 46.600 L25 48.400 L10.700 61 L4 62 L7 53.700 Z" fill="#3f3b46"/>
<path d="M42.300 12.800 L21.300 35.900 L15 47 L30.200 46.600 L42.700 41.200 L51.600 30.600 L54.200 21.700 L49.800 14.600 Z" fill="#3bae8c"/>
<path d="M40 16 L26 31 L34 31 L44 22 Z" fill="#58c8a0"/>
<path d="M46.200 23.500 L54.200 21.700 L52.800 33.200 L46.200 40.800 L41.500 40 Z" fill="#226c84"/>
<path d="M50 27 L54 24 L52.600 33 L48 38.500 Z" fill="#1b4f66"/>
<path d="M37.300 27.900 L41.800 33.200 L26.700 46.600 L10.700 55.500 L8 51.900 L21.300 39.500 Z" fill="#645d74"/>
<path d="M30 36 L38 31 L28 43 L16 50 Z" fill="#7a7288"/>
<ellipse cx="51.200" cy="17.200" rx="4" ry="5.500" fill="#2c56a4"/>
<circle cx="48.400" cy="9" r="6.300" fill="#2e989c"/>
<path d="M42.300 8 a6.300 6.300 0 0 1 10 -4.200 l-4 4.500 z" fill="#3cb2a4"/>
<ellipse cx="43.600" cy="42.300" rx="2.600" ry="2" fill="#2a2a30"/>
<path d="M54 7.200 L67.600 3.500 L67.900 5 L55 10.200 Z" fill="#e4463c"/>
<path d="M67.600 3.500 L78.800 2 L78.800 2.900 L67.900 5 Z" fill="#a89c92"/>
<circle cx="49.800" cy="8.600" r="1.300" fill="#16161a"/>
</g>
</g></svg>
<div class="a blur" style="left:254px;top:166px;width:5.5px;height:3.2px;border-radius:1.6px;background:#5d8fd6;border:.5px solid #3868b0"></div>
<svg class="a blur" style="left:442px;top:174px" width="18" height="18" viewBox="0 0 18 18"><rect x="1" y="1.500" width="16" height="15.500" fill="#dcedf9"/><rect x="6" y="0.500" width="6" height="2.500" rx="1.200" fill="#6a9ede"/><circle cx="8.800" cy="9.500" r="5.800" fill="none" stroke="#2a6f8f" stroke-width="1.500" stroke-dasharray="1.500 1.200"/><circle cx="8.800" cy="9.500" r="3.100" fill="#2384b8"/></svg>
<svg class="a blur" style="left:442px;top:239px" width="18" height="19" viewBox="0 0 18 19"><rect x="5.500" y="1.200" width="7" height="2.600" rx="1.300" fill="#4f8fe0"/><path d="M6 4.500 h5.500 v3.500 h3.500 v5 h-3.500 v3.500 h-5.500 v-3.500 h-3.500 v-5 h3.500 z" fill="#f2a21c"/><path d="M8.700 5 v11 M3 10.500 h11.500" stroke="#fde6b8" stroke-width="1.100"/><rect x="3" y="5" width="2.500" height="2.500" fill="#f7c469"/><rect x="12" y="5" width="2.500" height="2.500" fill="#f7c469"/><rect x="3" y="13.500" width="2.500" height="2.500" fill="#f7c469"/><rect x="12" y="13.500" width="2.500" height="2.500" fill="#f7c469"/></svg>
<div class="a blur" id="menu">
<div style="top:251.2px;height:8.4px;background:#91c6f4"></div>
<div style="top:1.7px"><u>New</u></div>
<div style="top:10.7px"><u>Open...</u><b>Ctrl+O</b></div>
<div style="top:20.2px"><u>Browse in Bridge...</u><b>Ctrl+Alt+O</b></div>
<div style="top:29.2px"><u>Open Recent</u></div>
<div style="top:41.2px"><u>Close</u><b>Ctrl+W</b></div>
<div style="top:50.7px"><u>Save</u><b>Ctrl+S</b></div>
<div style="top:59.7px"><u>Save As...</u><b>Ctrl+Shift+S</b></div>
<div class="dis" style="top:68.7px"><u>Check In...</u></div>
<div style="top:78.2px"><u>Save a Copy...</u><b>Ctrl+Alt+S</b></div>
<div class="dis" style="top:87.7px"><u>Revert</u></div>
<div style="top:99.7px"><u>Search Adobe Stock...</u></div>
<div style="top:108.7px"><u>Place...</u><b>Ctrl+D</b></div>
<div style="top:117.7px"><u>Place from CC Libraries...</u></div>
<div style="top:127.2px"><u>Import XML...</u></div>
<div style="top:136.7px"><u>Import PDF Comments...</u></div>
<div style="top:148.2px"><u>Adobe PDF Presets</u></div>
<div style="top:157.7px"><u>Export...</u><b>Ctrl+E</b></div>
<div style="top:166.7px"><u>Share for Review...</u></div>
<div style="top:178.7px"><u>Publish Online...</u></div>
<div style="top:187.7px"><u>Publish Online Dashboard...</u></div>
<div style="top:199.7px"><u>Document Presets</u></div>
<div style="top:209.2px"><u>Document Setup...</u><b>Ctrl+Alt+P</b></div>
<div style="top:218.7px"><u>Adjust Layout...</u><b>Alt+Shift+P</b></div>
<div style="top:230.7px"><u>User...</u></div>
<div style="top:239.7px"><u>File Info...</u><b>Ctrl+Alt+Shift+I</b></div>
<div class="hl" style="top:251.7px"><u>Package...</u><b>Ctrl+Alt+Shift+P</b></div>
<div style="top:261.7px"><u>Print Presets</u></div>
<div style="top:270.7px"><u>Print...</u><b>Ctrl+P</b></div>
<div style="top:279.7px"><u>Print Booklet...</u></div>
<div style="top:291.7px"><u>Exit</u><b>Ctrl+Q</b></div>
<svg style="position:absolute;left:141px;top:3.5px" width="4" height="5"><path d="M1 0.500 L3 2.500 L1 4.500" stroke="#888" fill="none" stroke-width=".8"/></svg>
<svg style="position:absolute;left:141px;top:31.0px" width="4" height="5"><path d="M1 0.500 L3 2.500 L1 4.500" stroke="#888" fill="none" stroke-width=".8"/></svg>
<svg style="position:absolute;left:141px;top:150.0px" width="4" height="5"><path d="M1 0.500 L3 2.500 L1 4.500" stroke="#888" fill="none" stroke-width=".8"/></svg>
<svg style="position:absolute;left:141px;top:201.5px" width="4" height="5"><path d="M1 0.500 L3 2.500 L1 4.500" stroke="#888" fill="none" stroke-width=".8"/></svg>
<svg style="position:absolute;left:141px;top:263.5px" width="4" height="5"><path d="M1 0.500 L3 2.500 L1 4.500" stroke="#888" fill="none" stroke-width=".8"/></svg>
</div>
<div class="a" style="left:123.6px;top:260.6px;width:21px;height:20.500px;border-radius:50%;background:radial-gradient(closest-side,#dde43a 0,#dfe63c 70%,rgba(226,234,70,.75) 88%,rgba(230,236,90,0) 100%)"></div>
<svg class="a blur" style="left:131.3px;top:266.500px" width="6.3" height="8.4" viewBox="0 0 9 12"><path d="M1.500 1 L1.500 9 L3.500 7.300 L4.800 10.300 L6 9.800 L4.800 6.900 L7.300 6.800 Z" fill="#fff" stroke="#222" stroke-width=".8"/></svg>
</body></html>
